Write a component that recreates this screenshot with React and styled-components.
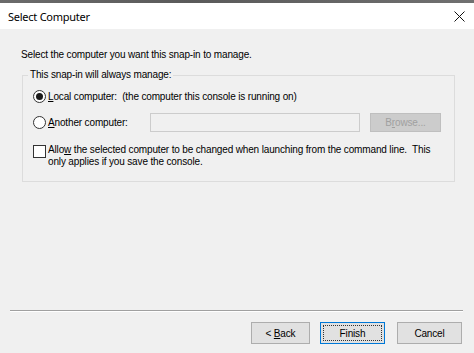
import React from "react";
import styled, { createGlobalStyle } from "styled-components";

const GlobalStyle = createGlobalStyle`
  html, body {
    margin: 0;
    padding: 0;
    width: 474px;
    height: 353px;
    overflow: hidden;
    background: #f0f0f0;
  }
  * { box-sizing: border-box; }
  body {
    font-family: "Liberation Sans", Arial, sans-serif;
    font-size: 10px;
    letter-spacing: -0.15px;
    color: #000;
  }
`;

const Window = styled.div`
  display: flex;
  flex-direction: column;
  width: 474px;
  height: 353px;
`;

const BackdropStrip = styled.div`
  height: 3px;
  background: linear-gradient(90deg, #6b6b6b, #5a5a5a 40%, #707070);
`;

const TitleBar = styled.div`
  height: 26px;
  background: #ffffff;
  display: flex;
  align-items: center;
  justify-content: space-between;
  padding: 0 9px 0 8px;
`;

const Title = styled.span`
  font-family: "Noto Sans", "Liberation Sans", sans-serif;
  font-size: 11px;
  letter-spacing: -0.25px;
  color: #000;
`;

const CloseIcon = styled.svg`
  width: 11px;
  height: 11px;
  display: block;
`;

const Body = styled.div`
  flex: 1;
  display: flex;
  flex-direction: column;
`;

const Content = styled.div`
  padding: 19px 19px 0 22px;
`;

const Intro = styled.div`
  line-height: 14px;
  margin-left: -1px;
`;

const GroupBox = styled.fieldset`
  margin: 6px 0 0 0;
  padding: 0 0 13px 10px;
  width: 433px;
  border: 1px solid #dcdcdc;
  min-inline-size: 0;
`;

const Legend = styled.legend`
  margin-left: -5px;
  padding: 0 2px;
  line-height: 14px;
`;

const OptionRow = styled.div`
  display: flex;
  align-items: center;
  height: 20px;
  margin-top: ${(p) => p.$gap}px;
`;

const Radio = styled.span`
  width: 13px;
  height: 13px;
  border-radius: 50%;
  border: 1px solid #333;
  background: #fff;
  display: flex;
  align-items: center;
  justify-content: center;
  flex: none;
  margin-right: 2px;
  &::after {
    content: "";
    width: 7px;
    height: 7px;
    border-radius: 50%;
    background: ${(p) => (p.$checked ? "#1a1a1a" : "transparent")};
  }
`;

const Label = styled.span`
  white-space: pre;
  width: ${(p) => (p.$width ? `${p.$width}px` : "auto")};
  flex: none;
`;

const U = styled.span`
  text-decoration: underline;
  text-underline-offset: 1px;
`;

const TextInput = styled.div`
  width: 210px;
  height: 19px;
  border: 1px solid #cccccc;
  background: #f0f0f0;
  flex: none;
`;

const BrowseButton = styled.div`
  width: 71px;
  height: 19px;
  margin-left: 10px;
  background: #cccccc;
  border: 1px solid #bfbfbf;
  color: #a0a0a0;
  display: flex;
  align-items: center;
  justify-content: center;
  flex: none;
`;

const CheckRow = styled.div`
  display: flex;
  align-items: flex-start;
  margin-top: 12px;
`;

const CheckBox = styled.span`
  width: 13px;
  height: 13px;
  border: 1px solid #333;
  background: #fff;
  margin-top: 1px;
  margin-right: 2px;
  flex: none;
`;

const CheckText = styled.div`
  line-height: 12px;
  width: 400px;
  white-space: pre;
`;

const Footer = styled.div`
  margin-top: auto;
`;

const Separator = styled.div`
  height: 2px;
  margin: 0 11px 0 10px;
  border-top: 1px solid #a0a0a0;
  border-bottom: 1px solid #ffffff;
`;

const ButtonRow = styled.div`
  display: flex;
  justify-content: flex-end;
  padding: 10px 12px 9px 0;
`;

const Button = styled.div`
  width: ${(p) => p.$w}px;
  height: 22px;
  margin-right: ${(p) => p.$mr || 0}px;
  background: #e1e1e1;
  border: 1px solid ${(p) => (p.$default ? "#0078d7" : "#adadad")};
  display: flex;
  align-items: center;
  justify-content: center;
  white-space: pre;
  position: relative;
  ${(p) =>
    p.$default
      ? `&::before {
      content: "";
      position: absolute;
      inset: 2px;
      border: 1px dotted #333;
    }`
      : ""}
`;

export default function App() {
  return (
    <>
      <GlobalStyle />
      <Window>
        <BackdropStrip />
        <TitleBar>
          <Title>Select Computer</Title>
          <CloseIcon viewBox="0 0 11 11">
            <path d="M0.5 0.5 L10.5 10.5 M10.5 0.5 L0.5 10.5" stroke="#111" strokeWidth="1" />
          </CloseIcon>
        </TitleBar>
        <Body>
          <Content>
            <Intro>Select the computer you want this snap-in to manage.</Intro>
            <GroupBox>
              <Legend>This snap-in will always manage:</Legend>
              <OptionRow $gap={4}>
                <Radio $checked />
                <Label>
                  <U>L</U>
                  {"ocal computer:  (the computer this console is running on)"}
                </Label>
              </OptionRow>
              <OptionRow $gap={6}>
                <Radio />
                <Label $width={102}>
                  <U>A</U>
                  {"nother computer:"}
                </Label>
                <TextInput />
                <BrowseButton>
                  {"B"}
                  <U>r</U>
                  {"owse..."}
                </BrowseButton>
              </OptionRow>
              <CheckRow>
                <CheckBox />
                <CheckText>
                  {"Allo"}
                  <U>w</U>
                  {" the selected computer to be changed when launching from the command line.  This\nonly applies if you save the console."}
                </CheckText>
              </CheckRow>
            </GroupBox>
          </Content>
          <Footer>
            <Separator />
            <ButtonRow>
              <Button $w={59} $mr={10}>
                {"< "}
                <U>B</U>
                {"ack"}
              </Button>
              <Button $w={65} $mr={12} $default>
                Finish
              </Button>
              <Button $w={65}>Cancel</Button>
            </ButtonRow>
          </Footer>
        </Body>
      </Window>
    </>
  );
}
